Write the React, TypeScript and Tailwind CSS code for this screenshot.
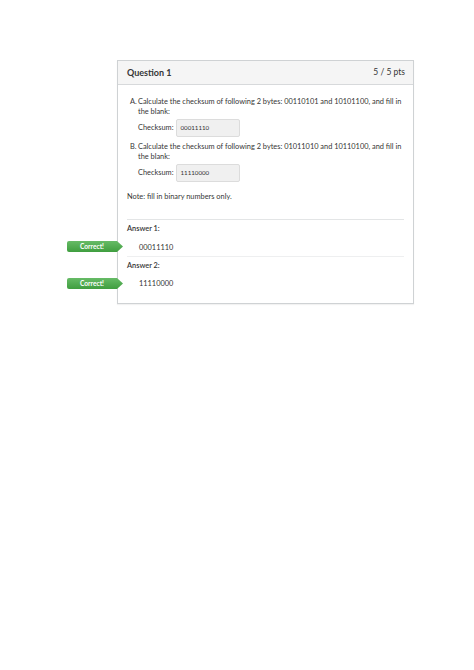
import React from "react";

function Badge({ top }: { top: string }) {
  return (
    <div
      className={`absolute left-[-60px] ${top} h-[11px] w-[56px] rounded-l-[2px] bg-gradient-to-b from-[#66bb66] to-[#3f9e3f] [clip-path:polygon(0_0,calc(100%-6px)_0,100%_50%,calc(100%-6px)_100%,0_100%)] flex items-center`}
    >
      <span className="w-[50px] text-center text-[6.6px] font-bold leading-none text-white">Correct!</span>
    </div>
  );
}

function Question({ marker, text, value }: { marker: string; text: string; value: string }) {
  return (
    <div className="flex">
      <div className="w-[8px] shrink-0 whitespace-nowrap">{marker}</div>
      <div className="flex flex-col">
        <div className="whitespace-nowrap">{text}</div>
        <div>the blank:</div>
        <div className="flex items-center gap-[2px] mt-[2px]">
          <span>Checksum:</span>
          <div className="h-[18px] w-[64px] rounded-[2px] border border-[#dcdcdc] bg-[#f0f0f0] flex items-center pl-[4px] text-[6.2px] text-[#333]">
            {value}
          </div>
        </div>
      </div>
    </div>
  );
}

export default function App() {
  return (
    <div className="min-h-[670px] w-[474px] bg-white pt-[60px] pl-[117px] font-['Lato','Liberation_Sans',sans-serif] text-[#363636]">
      <div className="w-[297px] border border-[#cfd2d4] bg-white shadow-[0_1px_1px_rgba(0,0,0,0.05)]">
        <div className="flex h-[24px] items-center justify-between border-b border-[#d7d9db] bg-[#f5f5f5] pl-[9px] pr-[8px]">
          <span className="text-[9px] font-bold">Question 1</span>
          <span className="text-[8.5px]">5 / 5 pts</span>
        </div>
        <div className="px-[9px] pt-[12px] pb-[14px] text-[7.4px] leading-[10px]">
          <div className="pl-[3px]">
            <Question
              marker="A."
              text="Calculate the checksum of following 2 bytes: 00110101 and 10101100, and fill in"
              value="00011110"
            />
            <div className="mt-[5px]">
              <Question
                marker="B."
                text="Calculate the checksum of following 2 bytes: 01011010 and 10110100, and fill in"
                value="11110000"
              />
            </div>
          </div>
          <div className="mt-[10px]">Note: fill in binary numbers only.</div>
          <div className="mt-[17px] border-t border-[#e3e5e6]" />
          <div className="mt-[4px] font-semibold">Answer 1:</div>
          <div className="relative mt-[9px] pl-[12px]">
            <Badge top="top-[-2px]" />
            00011110
          </div>
          <div className="mt-[3px] border-t border-[#eeeff0]" />
          <div className="mt-[4px] font-semibold">Answer 2:</div>
          <div className="relative mt-[8px] pl-[12px]">
            <Badge top="top-[-1px]" />
            11110000
          </div>
        </div>
      </div>
    </div>
  );
}
